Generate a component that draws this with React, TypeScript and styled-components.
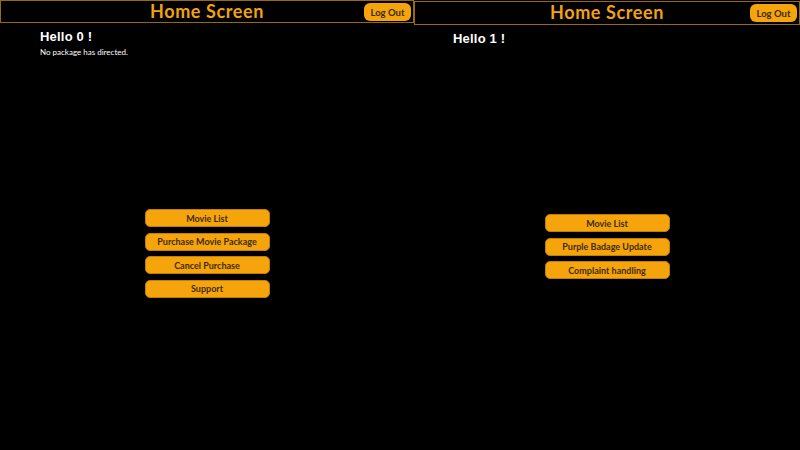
import React from "react";
import styled, { createGlobalStyle } from "styled-components";

const Global = createGlobalStyle`
  html, body { margin: 0; padding: 0; background: #000; }
  body { width: 800px; height: 450px; overflow: hidden; font-family: "Lato", "Liberation Sans", sans-serif; }
  #root { width: 800px; height: 450px; }
`;

const Page = styled.div`
  display: flex;
  width: 800px;
  height: 450px;
  background: #000;
`;

const Screen = styled.div<{ $w: number; $top: number }>`
  width: ${(p) => p.$w}px;
  height: 450px;
  display: flex;
  flex-direction: column;
  padding-top: ${(p) => p.$top}px;
  box-sizing: border-box;
`;

const Header = styled.header<{ $h: number }>`
  position: relative;
  height: ${(p) => p.$h}px;
  box-sizing: border-box;
  border: 1px solid #9a6a08;
  display: flex;
  align-items: center;
  justify-content: center;
`;

const Title = styled.h1`
  margin: 0 0 2px;
  font-family: "Lato", sans-serif;
  font-weight: 700;
  font-size: 18px;
  letter-spacing: 0.6px;
  color: #f2a30f;
  line-height: 1;
`;

const LogOut = styled.button`
  position: absolute;
  right: 2px;
  top: 2px;
  width: 47px;
  height: 18px;
  border: none;
  border-radius: 6px;
  background: #f5a40c;
  color: #3a2a08;
  font-family: "Lato", sans-serif;
  font-size: 9.5px;
  font-weight: 700;
  padding: 0;
`;

const Greeting = styled.div<{ $left: number; $top: number }>`
  padding: ${(p) => p.$top}px 0 0 ${(p) => p.$left}px;
  color: #fff;
`;

const Hello = styled.div`
  font-family: "Liberation Sans", sans-serif;
  font-weight: 700;
  font-size: 13px;
  line-height: 15px;
  letter-spacing: 0.2px;
`;

const Note = styled.div`
  font-family: "Lato", sans-serif;
  font-size: 8px;
  line-height: 12px;
  margin-top: 2px;
`;

const Menu = styled.div<{ $top: number; $w: number }>`
  display: flex;
  flex-direction: column;
  align-items: center;
  gap: 5.5px;
  margin-top: ${(p) => p.$top}px;
  & > button { width: ${(p) => p.$w}px; }
`;

const MenuButton = styled.button`
  height: 18px;
  box-sizing: border-box;
  border: 1px solid #c07f05;
  border-radius: 5px;
  background: #f5a40c;
  color: #3d2b08;
  font-family: "Lato", sans-serif;
  font-size: 9px;
  font-weight: 700;
  padding: 0;
  box-shadow: 0 1px 1px rgba(0,0,0,0.5);
`;

export default function App() {
  return (
    <>
      <Global />
      <Page>
        <Screen $w={414} $top={0}>
          <Header $h={23}>
            <Title>Home Screen</Title>
            <LogOut>Log Out</LogOut>
          </Header>
          <Greeting $left={40} $top={6}>
            <Hello>Hello 0 !</Hello>
            <Note>No package has directed.</Note>
          </Greeting>
          <Menu $top={151} $w={125}>
            <MenuButton>Movie List</MenuButton>
            <MenuButton>Purchase Movie Package</MenuButton>
            <MenuButton>Cancel Purchase</MenuButton>
            <MenuButton>Support</MenuButton>
          </Menu>
        </Screen>
        <Screen $w={386} $top={1}>
          <Header $h={24}>
            <Title>Home Screen</Title>
            <LogOut>Log Out</LogOut>
          </Header>
          <Greeting $left={39} $top={6}>
            <Hello>Hello 1 !</Hello>
          </Greeting>
          <Menu $top={168} $w={125}>
            <MenuButton>Movie List</MenuButton>
            <MenuButton>Purple Badage Update</MenuButton>
            <MenuButton>Complaint handling</MenuButton>
          </Menu>
        </Screen>
      </Page>
    </>
  );
}
